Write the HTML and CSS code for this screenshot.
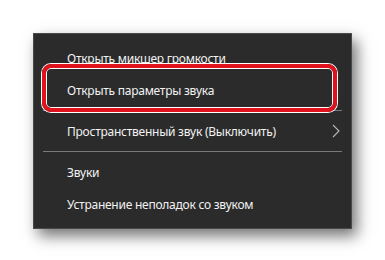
FILE: index.html
```html
<!DOCTYPE html>
<html lang="ru">

<head>
    <meta charset="UTF-8">
    <title>Звук</title>
    <link rel="stylesheet" href="styles.css">
</head>

<body>
    <div class="page">
        <ul class="menu">
            <li class="item">Открыть микшер громкости</li>
            <li class="item current">Открыть параметры звука<span class="mark"></span></li>
            <li class="sep"></li>
            <li class="item sub">Пространственный звук (Выключить)
                <svg class="arrow" width="8" height="14" viewBox="0 0 8 14">
                    <path d="M1 1 L7 7 L1 13" fill="none" stroke="#b8b8b8" stroke-width="1.1" />
                </svg>
            </li>
            <li class="sep"></li>
            <li class="item">Звуки</li>
            <li class="item">Устранение неполадок со звуком</li>
        </ul>
    </div>
</body>

</html>
```

FILE: styles.css
```css
* {
    margin: 0;
    padding: 0;
    list-style: none;
    box-sizing: border-box;
}

body {
    width: 385px;
    height: 260px;
    background: #fff;
    font-family: "Noto Sans", "Open Sans", sans-serif;
    overflow: hidden;
}

.page {
    padding: 33px 0 0 33px;
}

.menu {
    width: 319px;
    padding: 8px 0;
    background-color: #2b2b2b;
    border: 1px solid #4a4a4a;
    box-shadow: 5px 7px 14px rgba(0, 0, 0, 0.55);
}

.item {
    position: relative;
    display: flex;
    align-items: center;
    height: 32px;
    padding-left: 33px;
    color: #f2f2f2;
    font-size: 12px;
    letter-spacing: -0.25px;
}

.sub .arrow {
    position: absolute;
    right: 11px;
    top: 9px;
}

.sep {
    height: 9px;
    padding: 4px 9px 0;
}

.sep::before {
    content: "";
    display: block;
    height: 1px;
    background-color: #7a7a7a;
}

.mark {
    position: absolute;
    left: 8px;
    right: 14px;
    top: -10px;
    bottom: -6px;
    border: 4px solid #e0121c;
    border-radius: 9px;
    box-shadow: 0 0 0 1px #fff, inset 0 0 0 1px #fff;
}
```
